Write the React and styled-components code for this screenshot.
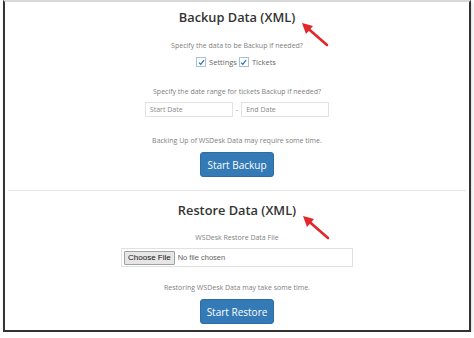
import styled, { createGlobalStyle } from "styled-components";

const GlobalStyle = createGlobalStyle`
  html, body {
    margin: 0;
    padding: 0;
    background: #fff;
  }
  body {
    font-family: "Open Sans", "Noto Sans", sans-serif;
    color: #555;
  }
`;

const Frame = styled.div`
  width: 464px;
  height: 328px;
  margin-left: 3px;
  border-top: 2px solid #d9d9d9;
  border-left: 2px solid #333;
  border-right: 2px solid #333;
  border-bottom: 2px solid #333;
  box-shadow: 1px 2px 3px rgba(0, 0, 0, 0.15);
  background: #fff;
`;

const Section = styled.div`
  display: flex;
  flex-direction: column;
  align-items: center;
  padding-top: ${(p) => p.$top}px;
`;

const TitleWrap = styled.div`
  position: relative;
`;

const Title = styled.h2`
  margin: 0;
  font-size: 12.8px;
  line-height: 20px;
  font-weight: 600;
  color: #333;
`;

const Arrow = styled.svg`
  position: absolute;
  left: 100%;
  top: 15px;
  margin-left: 6px;
`;

const Hint = styled.div`
  margin-top: ${(p) => p.$mt}px;
  font-size: 7px;
  line-height: 12px;
  color: #808080;
`;

const CheckRow = styled.div`
  margin-top: 4px;
  display: flex;
  align-items: center;
  height: 12px;
  font-size: 7.5px;
  color: #666;
`;

const CheckLabel = styled.label`
  display: flex;
  align-items: center;
  gap: 3px;
  margin-right: 2px;
`;

const Box = styled.span`
  width: 8px;
  height: 8px;
  border: 1px solid #a8c0da;
  background: #fff;
  display: flex;
  align-items: center;
  justify-content: center;
`;

const DateRow = styled.div`
  margin-top: 4px;
  display: flex;
  align-items: center;
  gap: 3px;
  font-size: 7px;
  color: #888;
`;

const DateInput = styled.div`
  width: 82px;
  height: 13px;
  border: 1px solid #e2e2e2;
  padding-left: 4px;
  display: flex;
  align-items: center;
  font-size: 7px;
  color: #888;
`;

const Button = styled.button`
  margin-top: 5px;
  width: 74px;
  height: 25px;
  border: 1px solid #2e6da4;
  border-radius: 3px;
  background: #337ab7;
  color: #fff;
  font-family: "Open Sans", sans-serif;
  font-size: 10px;
  padding: 0;
  cursor: pointer;
`;

const Divider = styled.hr`
  margin: 13px 3px 0;
  border: 0;
  border-top: 1px solid #e8e8e8;
`;

const FileBox = styled.div`
  margin-top: 4px;
  width: 226px;
  height: 17px;
  border: 1px solid #e0e0e0;
  padding: 0 2px;
  display: flex;
  align-items: center;
  gap: 3px;
  font-family: "Liberation Sans", Arial, sans-serif;
  font-size: 7.5px;
  color: #666;
`;

const FileButton = styled.span`
  height: 12px;
  padding: 0 3px;
  border: 1px solid #a0a0a0;
  border-radius: 1px;
  background: #e6e6e6;
  color: #111;
  font-size: 8px;
  display: flex;
  align-items: center;
`;

const RedArrow = () => (
  <Arrow width="30" height="26" viewBox="0 0 30 26">
    <line x1="26" y1="23" x2="7" y2="6.5" stroke="#e2262b" strokeWidth="2.6" strokeLinecap="round" />
    <polygon points="1,1 12,4 5,12" fill="#e2262b" />
  </Arrow>
);

const Check = () => (
  <Box>
    <svg width="7" height="7" viewBox="0 0 7 7">
      <path d="M1 3.6 L2.8 5.4 L6 1.2" fill="none" stroke="#2271b1" strokeWidth="1.2" />
    </svg>
  </Box>
);

export default function App() {
  return (
    <>
      <GlobalStyle />
      <Frame>
        <Section $top={5}>
          <TitleWrap>
            <Title>Backup Data (XML)</Title>
            <RedArrow />
          </TitleWrap>
          <Hint $mt={13}>Specify the data to be Backup if needed?</Hint>
          <CheckRow>
            <CheckLabel>
              <Check />
              Settings
            </CheckLabel>
            <CheckLabel>
              <Check />
              Tickets
            </CheckLabel>
          </CheckRow>
          <Hint $mt={18}>Specify the date range for tickets Backup if needed?</Hint>
          <DateRow>
            <DateInput>Start Date</DateInput>
            -
            <DateInput>End Date</DateInput>
          </DateRow>
          <Hint $mt={18}>Backing Up of WSDesk Data may require some time.</Hint>
          <Button>Start Backup</Button>
        </Section>
        <Divider />
        <Section $top={9}>
          <TitleWrap>
            <Title>Restore Data (XML)</Title>
            <RedArrow />
          </TitleWrap>
          <Hint $mt={12}>WSDesk Restore Data File</Hint>
          <FileBox>
            <FileButton>Choose File</FileButton>
            No file chosen
          </FileBox>
          <Hint $mt={15}>Restoring WSDesk Data may take some time.</Hint>
          <Button>Start Restore</Button>
        </Section>
      </Frame>
    </>
  );
}
